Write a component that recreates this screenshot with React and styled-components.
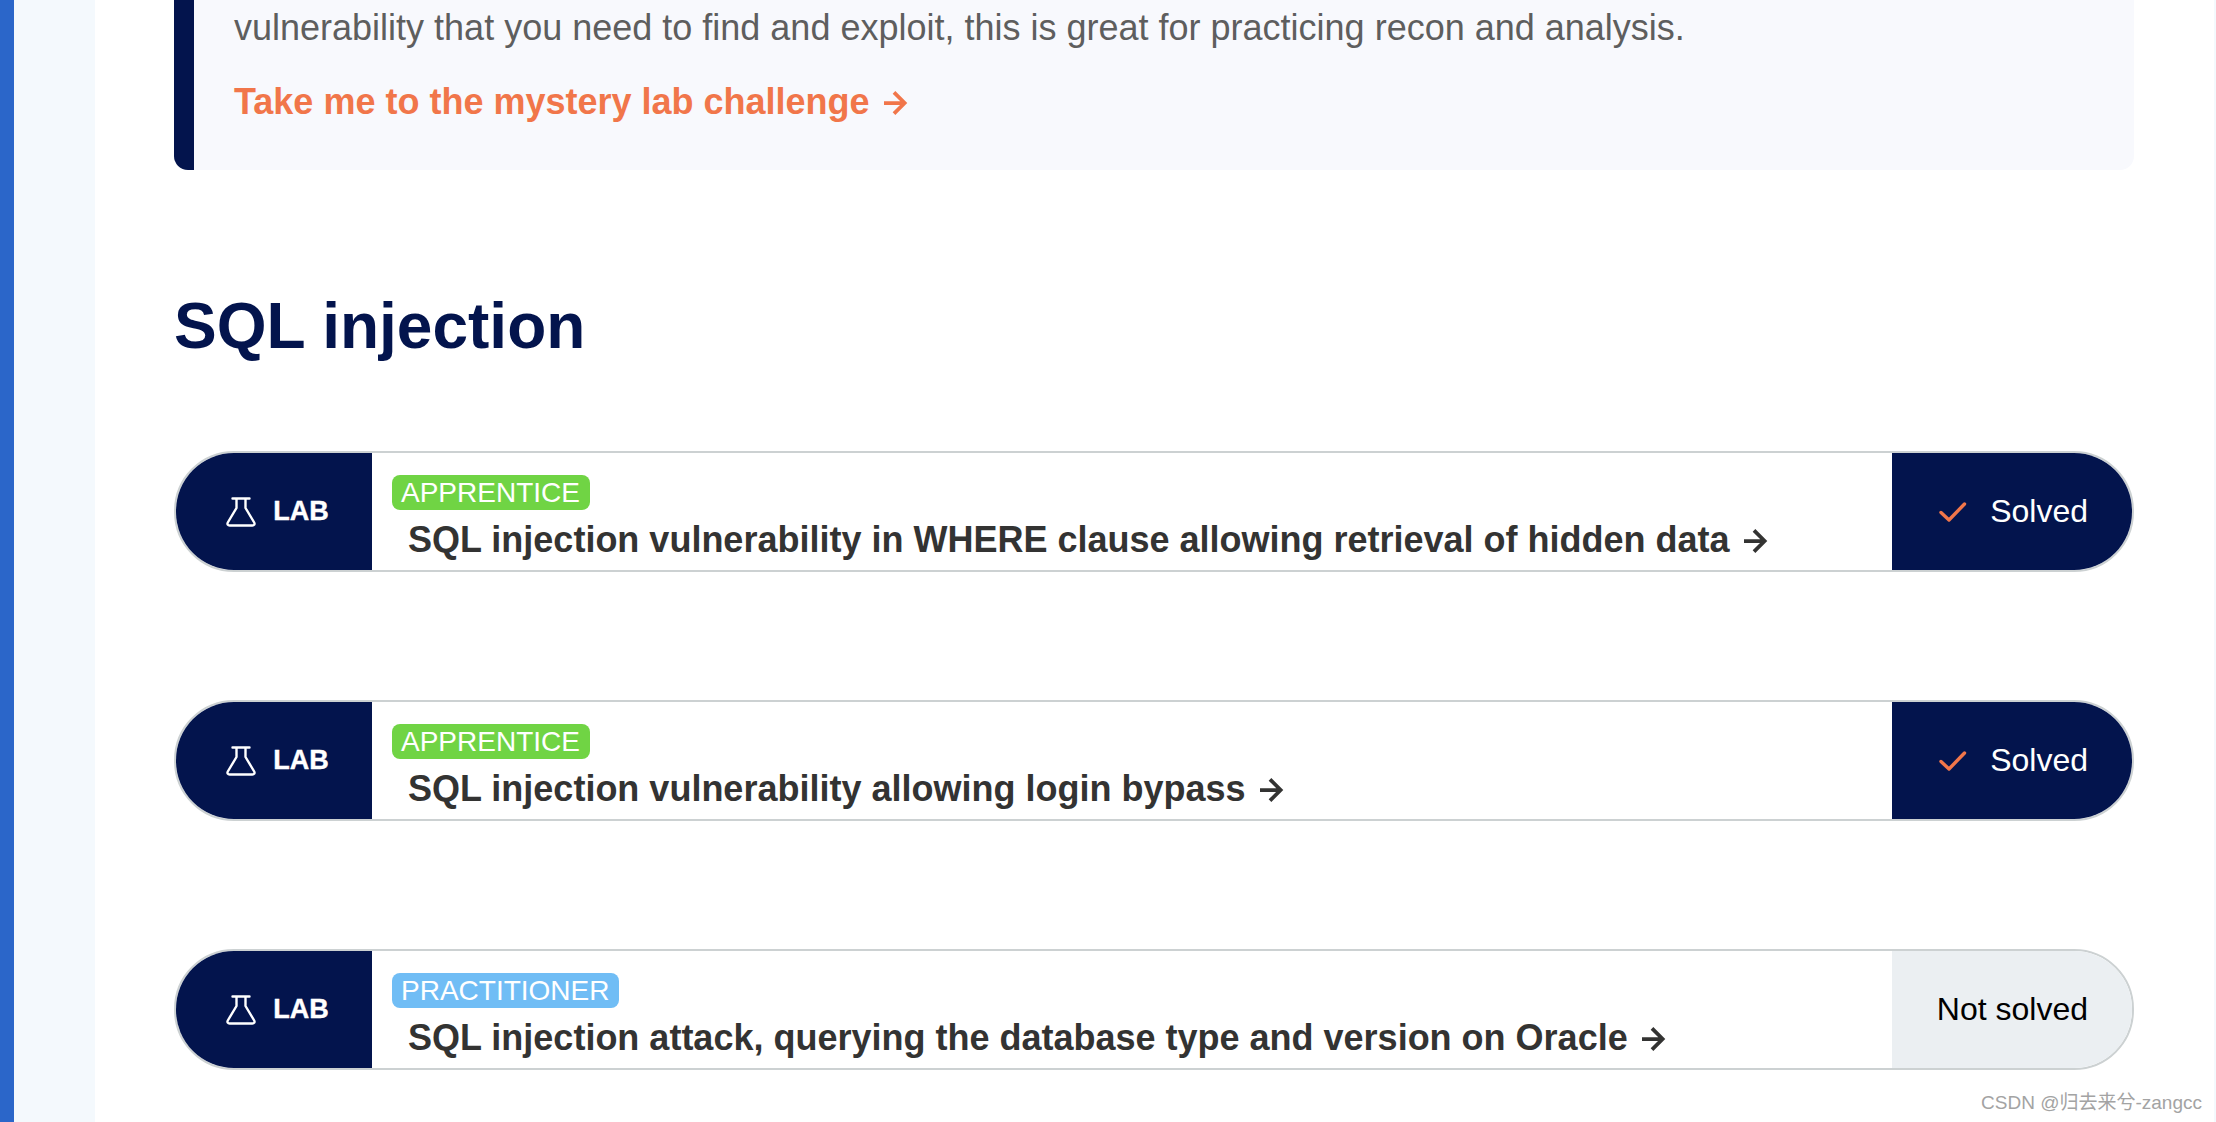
import React from "react";
import styled, { createGlobalStyle } from "styled-components";

const labs = [
  { level: "APPRENTICE", title: "SQL injection vulnerability in WHERE clause allowing retrieval of hidden data", solved: true },
  { level: "APPRENTICE", title: "SQL injection vulnerability allowing login bypass", solved: true },
  { level: "PRACTITIONER", title: "SQL injection attack, querying the database type and version on Oracle", solved: false },
];

const Arrow = () => (
  <ArrowSvg width="30" height="30" viewBox="0 0 24 24" fill="none" stroke="currentColor" strokeWidth="3">
    <path d="M4 12h16.5M12 3.5l8.5 8.5-8.5 8.5" />
  </ArrowSvg>
);

const Flask = () => (
  <svg width="30" height="30" viewBox="0 0 30 30" fill="none" stroke="#fff" strokeWidth="2.4" strokeLinecap="round" strokeLinejoin="round">
    <path d="M6.5 1.5h17M10.5 1.5v9.5L1.8 25.5c-.9 1.6.1 3 1.8 3h22.8c1.7 0 2.7-1.4 1.8-3L19.5 11V1.5" />
  </svg>
);

const Check = () => (
  <svg width="28" height="22" viewBox="0 0 28 22" fill="none" stroke="#f1764a" strokeWidth="3.4" strokeLinecap="round" strokeLinejoin="round">
    <path d="M2 11.5l8 7.5L25.5 3" />
  </svg>
);

export default function App() {
  return (
    <Page>
      <GlobalStyle />
      <LeftStripe />
      <LeftBand />
      <Content>
        <Callout>
          <CalloutText>vulnerability that you need to find and exploit, this is great for practicing recon and analysis.</CalloutText>
          <MysteryLink>
            Take me to the mystery lab challenge <Arrow />
          </MysteryLink>
        </Callout>
        <Heading>SQL injection</Heading>
        <LabList>
          {labs.map((lab) => (
            <LabRow key={lab.title}>
              <LabTag>
                <Flask />
                <LabWord>LAB</LabWord>
              </LabTag>
              <LabBody>
                <Level $level={lab.level}>{lab.level}</Level>
                <LabTitle>
                  {lab.title} <Arrow />
                </LabTitle>
              </LabBody>
              <Status $solved={lab.solved}>
                {lab.solved && <Check />}
                {lab.solved ? "Solved" : "Not solved"}
              </Status>
            </LabRow>
          ))}
        </LabList>
      </Content>
      <RightBand />
      <Watermark>CSDN @归去来兮-zangcc</Watermark>
    </Page>
  );
}

const GlobalStyle = createGlobalStyle`
  html, body {
    margin: 0;
    padding: 0;
    background: #fff;
    overflow: hidden;
  }
  body {
    font-family: "Liberation Sans", Arial, sans-serif;
  }
`;
const Page = styled.div`
  position: relative;
  display: flex;
  width: 2216px;
  height: 1122px;
  overflow: hidden;
`;
const LeftStripe = styled.div`
  width: 14px;
  background: #2b66c9;
`;
const LeftBand = styled.div`
  width: 81px;
  background: #f4f9fd;
`;
const RightBand = styled.div`
  width: 2px;
  background: #f4f9fd;
`;
const Content = styled.main`
  flex: 1;
  padding: 0 80px 0 79px;
`;
const Callout = styled.section`
  height: 170px;
  box-sizing: border-box;
  padding: 8px 0 0 40px;
  background: #f8f9fd;
  border-left: 20px solid #03144d;
  border-bottom-left-radius: 14px;
  border-bottom-right-radius: 14px;
`;
const CalloutText = styled.p`
  margin: 0;
  font-size: 36px;
  line-height: 40px;
  color: #5e5e5e;
`;
const MysteryLink = styled.a`
  display: block;
  margin-top: 34px;
  font-size: 36px;
  line-height: 40px;
  font-weight: 700;
  color: #f1764a;
`;
const ArrowSvg = styled.svg`
  margin-left: -1px;
  vertical-align: -4px;
`;
const Heading = styled.h1`
  margin: 120px 0 0;
  font-size: 64px;
  line-height: 72px;
  font-weight: 700;
  color: #03144d;
`;
const LabList = styled.div`
  display: flex;
  flex-direction: column;
  gap: 128px;
  margin-top: 89px;
`;
const LabRow = styled.article`
  display: flex;
  height: 121px;
  box-sizing: border-box;
  border: 2px solid #ccd1d2;
  border-radius: 60px;
  overflow: hidden;
  background: #fff;
`;
const LabTag = styled.div`
  display: flex;
  align-items: center;
  justify-content: center;
  gap: 17px;
  width: 196px;
  padding-left: 7px;
  box-sizing: border-box;
  background: #03144d;
`;
const LabWord = styled.span`
  font-size: 27px;
  font-weight: 700;
  color: #fff;
  -webkit-text-stroke: 0.4px #fff;
`;
const LabBody = styled.div`
  flex: 1;
  padding: 22px 0 0 20px;
`;
const Level = styled.span`
  display: inline-block;
  height: 35px;
  padding: 0 10px 0 9px;
  border-radius: 8px;
  font-size: 28px;
  line-height: 35px;
  color: #fff;
  background: ${(p) => (p.$level === "PRACTITIONER" ? "#70bdf5" : "#70d444")};
`;
const LabTitle = styled.div`
  margin: 10px 0 0 16px;
  font-size: 36px;
  line-height: 40px;
  font-weight: 700;
  color: #333332;
`;
const Status = styled.div`
  display: flex;
  align-items: center;
  justify-content: flex-end;
  gap: 23px;
  width: 240px;
  padding-right: 44px;
  box-sizing: border-box;
  font-size: 32px;
  color: ${(p) => (p.$solved ? "#fff" : "#000")};
  background: ${(p) => (p.$solved ? "#03144d" : "#ebeff2")};
`;
const Watermark = styled.div`
  position: absolute;
  right: 14px;
  bottom: 8px;
  font-size: 19px;
  color: #a3a3a3;
  font-family: "Liberation Sans", "Noto Sans CJK SC", sans-serif;
`;
